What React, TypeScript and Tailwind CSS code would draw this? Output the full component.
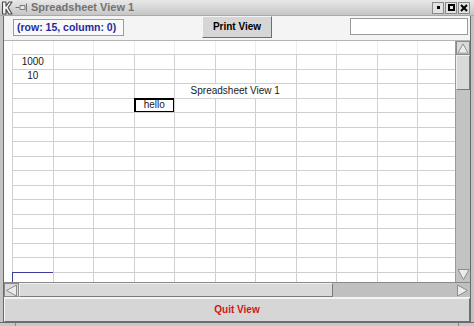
import React from "react";

const COLS = 11;
const ROWS = 16;

function Cell({ r, c }: { r: number; c: number }) {
  let content: React.ReactNode = null;
  if (r === 0 && c === 0) content = "1000";
  if (r === 1 && c === 0) content = "10";
  if (r === 3 && c === 3) content = "hello";
  return (
    <div className="relative w-[40.5px] h-full shrink-0 border-l border-t border-[#d0d0d0] flex items-center justify-center text-[10px] text-[#1a1a1a] leading-none">
      {content}
      {r === 3 && c === 3 && (
        <div className="absolute left-[-1px] top-[-1px] right-[-1px] bottom-[-1px] border-2 border-black" />
      )}
      {r === 15 && c === 0 && (
        <div className="absolute left-[-1px] top-[-1px] right-[-1px] bottom-[-1px] border border-[#3c3c9c]" />
      )}
    </div>
  );
}

function Row({ r }: { r: number }) {
  const cells: React.ReactNode[] = [];
  for (let c = 0; c < COLS; c++) {
    if (r === 2 && c === 4) {
      cells.push(
        <div
          key={c}
          className="w-[121.5px] h-full shrink-0 border-l border-t border-[#d0d0d0] flex items-center justify-center text-[10px] text-[#1a1a1a] leading-none whitespace-nowrap"
        >
          Spreadsheet View 1
        </div>
      );
      c += 2;
      continue;
    }
    cells.push(<Cell key={c} r={r} c={c} />);
  }
  return <div className="flex h-[14.53px] shrink-0">{cells}</div>;
}

function KLogo() {
  return (
    <svg width="12" height="14" viewBox="0 0 12 14">
      <path
        d="M1.5 1 H5 V5.2 L8 1 H11 L7.2 6.6 L11 13 H7.8 L5 8.2 V13 H1.5 Z"
        fill="#f6f6f6"
        stroke="#4a4a4a"
        strokeWidth="1.1"
        strokeLinejoin="round"
      />
    </svg>
  );
}

function PinIcon() {
  return (
    <svg width="13" height="9" viewBox="0 0 13 9">
      <line x1="0.5" y1="4.5" x2="4" y2="4.5" stroke="#777" strokeWidth="1" />
      <path d="M5 2.5 H10 V6.5 H5 Z" fill="#e8e8e8" stroke="#777" strokeWidth="1" />
      <line x1="11.5" y1="0.5" x2="11.5" y2="8.5" stroke="#777" strokeWidth="1" />
    </svg>
  );
}

function TitleButton({ kind }: { kind: "min" | "max" | "close" }) {
  return (
    <div className="w-[12px] h-[12px] bg-[#e2e2e2] border border-[#8a8a8a] flex items-center justify-center">
      {kind === "min" && <div className="w-[3px] h-[3px] bg-black" />}
      {kind === "max" && <div className="w-[7px] h-[7px] border-2 border-black" />}
      {kind === "close" && (
        <svg width="8" height="8" viewBox="0 0 8 8">
          <path d="M1 1 L7 7 M7 1 L1 7" stroke="#000" strokeWidth="2" />
        </svg>
      )}
    </div>
  );
}

function Arrow({ dir }: { dir: "up" | "down" | "left" | "right" }) {
  const d =
    dir === "up"
      ? "M6.5 1.5 L12 11.5 H1 Z"
      : dir === "down"
      ? "M1 1.5 H12 L6.5 11.5 Z"
      : dir === "left"
      ? "M1.5 6.5 L11.5 1 V12 Z"
      : "M11.5 6.5 L1.5 1 V12 Z";
  return (
    <svg width="13" height="13" viewBox="0 0 13 13">
      <path d={d} fill="#ececec" stroke="#8c8c8c" strokeWidth="1" />
    </svg>
  );
}

export default function App() {
  const rows: React.ReactNode[] = [];
  for (let r = 0; r < ROWS; r++) rows.push(<Row key={r} r={r} />);
  const topCols: React.ReactNode[] = [];
  for (let c = 0; c < COLS; c++)
    topCols.push(<div key={c} className="w-[40.5px] h-full shrink-0 border-l border-[#ededed]" />);

  return (
    <div
      className="w-[474px] h-[326px] bg-[#bcbcbc] flex flex-col overflow-hidden"
      style={{ fontFamily: '"Liberation Sans", Arial, sans-serif' }}
    >
      {/* Title bar */}
      <div className="h-[16px] shrink-0 flex items-center bg-gradient-to-b from-[#e8e8e8] to-[#c6c6c6] border-b border-[#a8a8a8] pl-[1px] pr-[4px]">
        <KLogo />
        <div className="ml-[2px]">
          <PinIcon />
        </div>
        <span className="ml-[3px] text-[11px] font-bold text-[#727272] leading-none">Spreadsheet View 1</span>
        <div className="ml-auto flex gap-[1px]">
          <TitleButton kind="min" />
          <TitleButton kind="max" />
          <TitleButton kind="close" />
        </div>
      </div>

      {/* Body */}
      <div className="flex-1 flex min-h-0">
        <div className="w-[4px] shrink-0 border-r border-[#6a6a6a] bg-[#c4c4c4]" />
        <div className="flex-1 flex flex-col min-w-0 bg-[#f1f1f1]">
          {/* Toolbar */}
          <div className="h-[24px] shrink-0 flex items-start bg-[#f4f4f4]">
            <div className="ml-[9px] mt-[3px] w-[111px] h-[17px] border border-[#9c9c9c] bg-[#f9f9f9] flex items-center pl-[3px]">
              <span className="text-[10.5px] font-bold text-[#1f2a9a] leading-none whitespace-nowrap">
                (row: 15, column: 0)
              </span>
            </div>
            <div className="ml-[78px] w-[70px] h-[22px] bg-[#d6d6d6] border border-t-[#f4f4f4] border-l-[#f4f4f4] border-b-[#6e6e6e] border-r-[#6e6e6e] flex items-center justify-center">
              <span className="text-[10px] font-bold text-black leading-none">Print View</span>
            </div>
            <div className="ml-auto mr-[2px] mt-[2px] w-[118px] h-[17px] bg-white border border-[#9a9a9a]" />
          </div>

          {/* Table + vertical scrollbar */}
          <div className="h-[242px] shrink-0 flex border-t border-[#b4b4b4]">
            <div className="flex-1 bg-white overflow-hidden flex flex-col pl-[8px]">
              <div className="flex h-[13px] shrink-0">{topCols}</div>
              {rows}
            </div>
            <div className="w-[15px] shrink-0 bg-[#c3c3c3] flex flex-col border-l border-[#9a9a9a]">
              <div className="h-[14px] shrink-0 bg-[#dadada] border border-[#8a8a8a] flex items-center justify-center">
                <Arrow dir="up" />
              </div>
              <div className="h-[35px] shrink-0 bg-[#d9d9d9] border border-t-[#f0f0f0] border-l-[#f0f0f0] border-b-[#7a7a7a] border-r-[#7a7a7a]" />
              <div className="flex-1" />
              <div className="h-[15px] shrink-0 flex items-center justify-center">
                <Arrow dir="down" />
              </div>
            </div>
          </div>

          {/* Horizontal scrollbar */}
          <div className="h-[15px] shrink-0 bg-[#c0c0c0] flex border-t border-[#8a8a8a]">
            <div className="w-[15px] shrink-0 bg-[#dadada] border border-[#8a8a8a] flex items-center justify-center">
              <Arrow dir="left" />
            </div>
            <div className="w-[314px] shrink-0 bg-[#d9d9d9] border border-t-[#f0f0f0] border-l-[#f0f0f0] border-b-[#7a7a7a] border-r-[#7a7a7a]" />
            <div className="flex-1" />
            <div className="w-[15px] shrink-0 flex items-center justify-center">
              <Arrow dir="right" />
            </div>
          </div>

          <div className="h-[1px] shrink-0 bg-[#f4f4f4]" />

          {/* Quit button */}
          <div className="h-[24px] shrink-0 bg-[#d6d6d6] border border-t-[#f4f4f4] border-l-[#f4f4f4] border-b-[#6e6e6e] border-r-[#6e6e6e] flex items-center justify-center">
            <span className="text-[10px] font-bold text-[#d01818] leading-none">Quit View</span>
          </div>
        </div>
        <div className="w-[4px] shrink-0 border-l border-[#6a6a6a] bg-[#c4c4c4]" />
      </div>

      {/* Bottom strip */}
      <div className="h-[4px] shrink-0 border-t border-[#6a6a6a] bg-[#c8c8c8] flex">
        <div className="w-[16px] border-r border-[#8a8a8a]" />
        <div className="flex-1" />
        <div className="w-[16px] border-l border-[#8a8a8a]" />
      </div>
    </div>
  );
}
